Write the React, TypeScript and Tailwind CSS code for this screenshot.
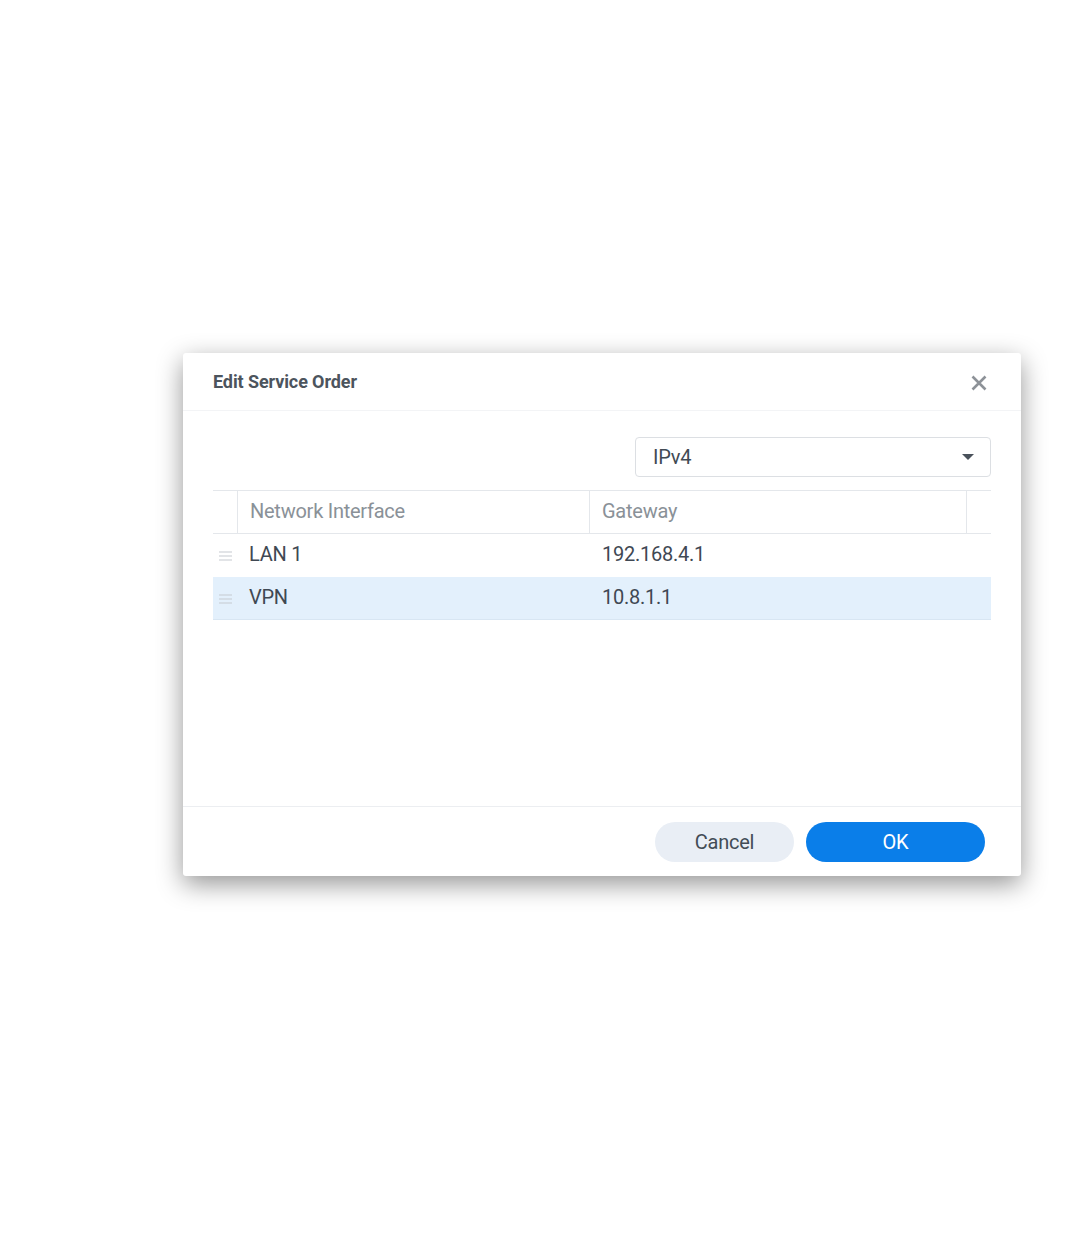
import { ReactNode } from "react";

const rows = [
  { name: "LAN 1", gateway: "192.168.4.1", selected: false },
  { name: "VPN", gateway: "10.8.1.1", selected: true },
];

function Handle() {
  return (
    <svg width="13" height="10" viewBox="0 0 13 10" className="text-[#c5cad0]">
      <path d="M0 1h13M0 5h13M0 9h13" stroke="currentColor" strokeWidth="1.2" />
    </svg>
  );
}

function HeaderCell({ children, className = "" }: { children?: ReactNode; className?: string }) {
  return <div className={`flex items-center border-l border-[#e4e7eb] ${className}`}>{children}</div>;
}

export default function App() {
  return (
    <div
      className="w-[1080px] h-[1259px] bg-white pt-[353px] pl-[183px]"
      style={{ fontFamily: "Roboto, 'Liberation Sans', sans-serif" }}
    >
      <div className="w-[838px] h-[523px] bg-white rounded-[3px] shadow-[0_8px_26px_rgba(0,0,0,0.42)] flex flex-col">
        {/* header */}
        <div className="h-[58px] flex items-center justify-between px-[30px] border-b border-[#f3f4f6]">
          <div className="text-[18px] tracking-[-0.1px] font-bold text-[#4c545d]">Edit Service Order</div>
          <svg width="18" height="18" viewBox="0 0 18 18" className="mr-[3px] mt-[3px]">
            <path d="M2.5 2.5l13 13M15.5 2.5l-13 13" stroke="#8d9298" strokeWidth="2.6" />
          </svg>
        </div>

        {/* body */}
        <div className="flex-1 px-[30px] pt-[26px] text-[20px] tracking-[-0.25px]">
          <div className="flex justify-end">
            <div className="w-[356px] h-[40px] border border-[#dcdfe3] rounded-[4px] flex items-center justify-between pl-[17px] pr-[16px]">
              <span className="text-[#414a54] pb-[1px]">IPv4</span>
              <svg width="12" height="6" viewBox="0 0 12 6">
                <path d="M0 0h12L6 6z" fill="#4a525b" />
              </svg>
            </div>
          </div>

          <div className="mt-[13px]">
            <div className="flex h-[44px] border-t border-b border-[#e4e7eb]">
              <div className="w-[24px]" />
              <HeaderCell className="w-[352px] pl-[12px] pb-[2px] text-[#8a9198]">Network Interface</HeaderCell>
              <HeaderCell className="w-[377px] pl-[12px] pb-[2px] text-[#8a9198]">Gateway</HeaderCell>
              <HeaderCell className="flex-1" />
            </div>
            {rows.map((r) => (
              <div
                key={r.name}
                className={`flex items-center h-[43px] pb-[3px] ${r.selected ? "bg-[#e3f0fc] border-b border-[#d8e6f3]" : ""}`}
              >
                <div className="w-[24px] flex justify-center pt-[4px]">
                  <Handle />
                </div>
                <div className="w-[352px] pl-[12px] text-[#3f4853]">{r.name}</div>
                <div className="pl-[13px] text-[#3f4853]">{r.gateway}</div>
              </div>
            ))}
          </div>
        </div>

        {/* footer */}
        <div className="h-[70px] border-t border-[#eceef1] flex items-center justify-end gap-[12px] pr-[36px] text-[20px] tracking-[-0.25px]">
          <button className="w-[139px] h-[40px] rounded-full bg-[#e9eef5] text-[#434c56]">Cancel</button>
          <button className="w-[179px] h-[40px] rounded-full bg-[#0a7ee9] text-white">OK</button>
        </div>
      </div>
    </div>
  );
}
